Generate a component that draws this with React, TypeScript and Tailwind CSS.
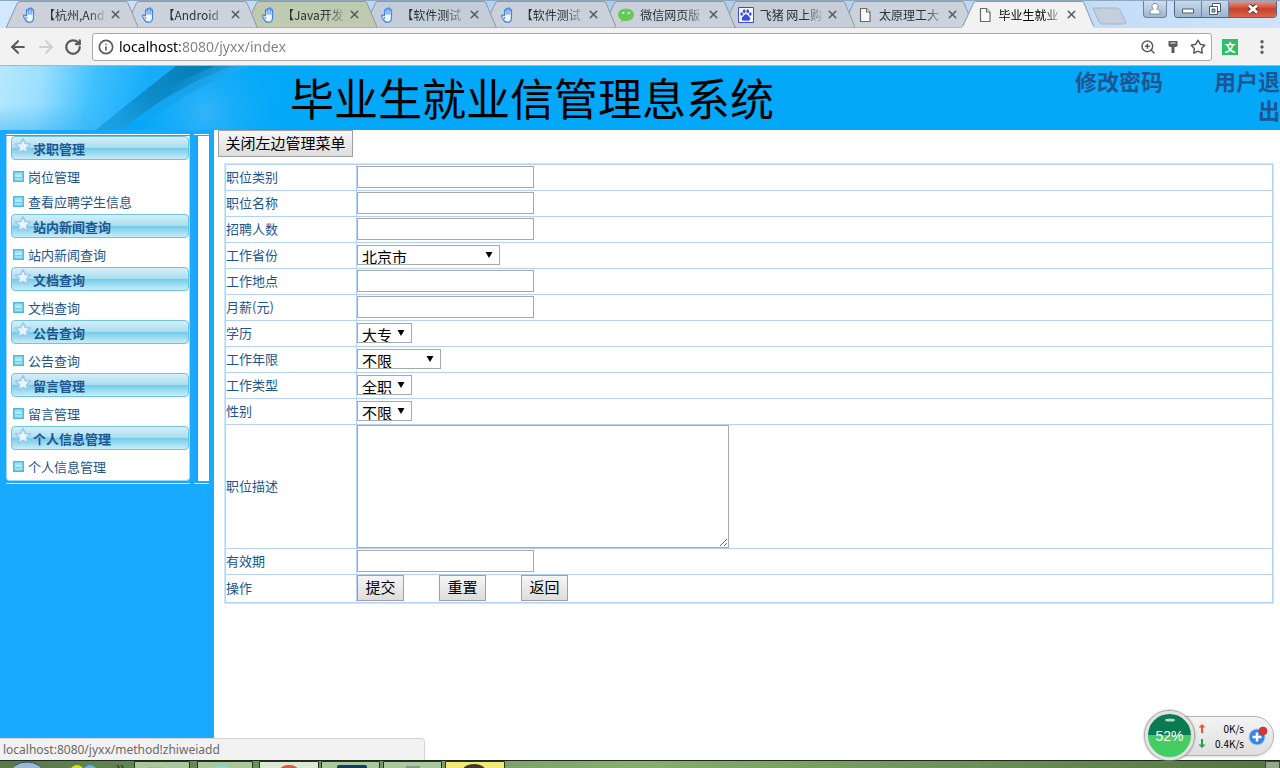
import React, { useState } from 'react';
import { ArrowLeft, ArrowRight, RotateCw, Info, ZoomIn, Star, X, MoreVertical } from 'lucide-react';

type Favicon = 'hand' | 'wechat' | 'paw' | 'file';

interface BrowserTab {
  title: string;
  icon: Favicon;
  fill: string;
}

interface MenuGroup {
  title: string;
  items: string[];
}

interface Field {
  id: string;
  label: string;
  type: 'text' | 'select' | 'textarea';
  options?: string[];
  width?: string;
}

const TABS: BrowserTab[] = [
  { title: '【杭州,And', icon: 'hand', fill: '#cdd2da' },
  { title: '【Android', icon: 'hand', fill: '#cdd3dc' },
  { title: '【Java开发', icon: 'hand', fill: '#bfcab0' },
  { title: '【软件测试', icon: 'hand', fill: '#c3ced8' },
  { title: '【软件测试', icon: 'hand', fill: '#cbd1da' },
  { title: '微信网页版', icon: 'wechat', fill: '#cbd1da' },
  { title: '飞猪 网上购', icon: 'paw', fill: '#c8ced8' },
  { title: '太原理工大', icon: 'file', fill: '#ccd2db' },
  { title: '毕业生就业', icon: 'file', fill: '#f2f2f2' },
];

const MENU: MenuGroup[] = [
  { title: '求职管理', items: ['岗位管理', '查看应聘学生信息'] },
  { title: '站内新闻查询', items: ['站内新闻查询'] },
  { title: '文档查询', items: ['文档查询'] },
  { title: '公告查询', items: ['公告查询'] },
  { title: '留言管理', items: ['留言管理'] },
  { title: '个人信息管理', items: ['个人信息管理'] },
];

const FIELDS: Field[] = [
  { id: 'category', label: '职位类别', type: 'text' },
  { id: 'name', label: '职位名称', type: 'text' },
  { id: 'count', label: '招聘人数', type: 'text' },
  { id: 'province', label: '工作省份', type: 'select', options: ['北京市', '上海市', '天津市'], width: 'w-[143px]' },
  { id: 'place', label: '工作地点', type: 'text' },
  { id: 'salary', label: '月薪(元)', type: 'text' },
  { id: 'degree', label: '学历', type: 'select', options: ['大专', '本科', '硕士'], width: 'w-[55px]' },
  { id: 'years', label: '工作年限', type: 'select', options: ['不限', '一年以上', '三年以上'], width: 'w-[84px]' },
  { id: 'kind', label: '工作类型', type: 'select', options: ['全职', '兼职'], width: 'w-[55px]' },
  { id: 'gender', label: '性别', type: 'select', options: ['不限', '男', '女'], width: 'w-[55px]' },
  { id: 'description', label: '职位描述', type: 'textarea' },
  { id: 'expiry', label: '有效期', type: 'text' },
];

const BUTTON = 'border border-[#a0a0a0] bg-linear-to-b from-[#f6f6f6] to-[#dddddd] pb-[2px] text-[15px] leading-[22px] text-black';

const TabIcon = ({ icon }: { icon: Favicon }) => {
  if (icon === 'hand') {
    return (
      <svg viewBox="0 0 16 16" className="size-4 shrink-0">
        <path
          d="M5.500 8.500V3.500c0-1.200 1.700-1.200 1.700 0V2.200c0-1.300 1.800-1.300 1.800 0v-.5c0-1.200 1.800-1.200 1.800 0v1.500c0-1.200 1.700-1.200 1.700 0V11c0 2.800-1.500 4.200-4 4.200S5 14.500 4.200 12.500L2.600 9.500c-.5-1.300.8-2 1.600-1z"
          fill="#f2f8ff"
          stroke="#3f83ee"
          strokeWidth="1.200"
          strokeLinejoin="round"
        />
        <path d="M7.200 3.500v4.200M9 2.200v5.500M10.800 3v4.700M4.500 9.500l1.500 1.200-.8 1.300" stroke="#3f83ee" strokeWidth=".9" fill="none" />
      </svg>
    );
  }
  if (icon === 'wechat') {
    return (
      <svg viewBox="0 0 16 16" className="size-4 shrink-0">
        <path d="M8 1.500c4.600 0 8 2.800 8 6.300s-3.400 6.200-8 6.200c-.9 0-1.700-.1-2.500-.3L2.800 15l.6-2.200C1.300 11.700 0 9.900 0 7.800 0 4.300 3.400 1.500 8 1.500z" fill="#64c958" />
        <circle cx="5.300" cy="6" r="1.100" fill="#fff" />
        <circle cx="10.700" cy="6" r="1.100" fill="#fff" />
      </svg>
    );
  }
  if (icon === 'paw') {
    return (
      <svg viewBox="0 0 16 16" className="size-4 shrink-0">
        <path d="M.5.5h15v15H.5z" fill="#f5f7ff" stroke="#3c4be0" />
        <g fill="#3c4be0">
          <ellipse cx="3.700" cy="7" rx="1.300" ry="1.800" />
          <ellipse cx="6.200" cy="4.200" rx="1.300" ry="1.900" />
          <ellipse cx="9.700" cy="4.200" rx="1.300" ry="1.900" />
          <ellipse cx="12.300" cy="7" rx="1.300" ry="1.800" />
          <path d="M8 7.200c1.700 0 2.200 1.800 3.500 2.900 1.400 1.300.8 3.700-1.200 3.700-.9 0-1.400-.3-2.300-.3s-1.400.3-2.300.3c-2 0-2.600-2.400-1.200-3.700C5.800 9 6.300 7.200 8 7.200z" />
        </g>
      </svg>
    );
  }
  return (
    <svg viewBox="0 0 16 16" className="size-4 shrink-0" fill="#fafafa" stroke="#6a6a6a" strokeWidth="1.200">
      <path d="M3.500 1.500h6l3.500 3.500v9.500H3.500z" />
      <path d="M9.500 1.500V5H13" />
    </svg>
  );
};

const TabStrip = () => (
  <div className="flex h-7 border-t border-[#8fa6bf] bg-linear-to-r from-[#d3e8fc] via-[#a9cbee] to-[#cfe4fa]">
    <div className="flex min-w-0 flex-1 pl-[6px]">
      {TABS.map((tab, i) => {
        const active = i === TABS.length - 1;
        return (
          <div
            key={i}
            className="relative flex min-w-0 flex-1 items-center pl-[15px]"
            style={{ zIndex: active ? 20 : 10 - i }}
          >
            <svg
              viewBox="0 0 132 28"
              preserveAspectRatio="none"
              className="absolute top-0 left-0 -z-10 h-full w-[calc(100%+13px)]"
            >
              <path d="M0 28L11.500 2Q12.500.5 14 .5H119Q120.500.5 121.500 2L132 28z" fill={tab.fill} stroke="#8d99a8" />
              {active && <path d="M0 27.500H132" stroke="#f2f2f2" strokeWidth="2" />}
            </svg>
            <TabIcon icon={tab.icon} />
            <span
              className={`ml-[6px] min-w-0 flex-1 text-xs whitespace-nowrap mask-r-from-70% ${active ? 'text-black' : 'text-[#2c3138]'}`}
            >
              {tab.title}
            </span>
            <button aria-label="关闭标签" className="mr-[3px] ml-px shrink-0 text-[#5a5f66]">
              <X size={13} strokeWidth={3} />
            </button>
          </div>
        );
      })}
    </div>
    <div className="flex w-[199px] items-start justify-between pr-[3px] pl-[11px]">
      <button aria-label="新标签" className="mt-[6px]">
        <svg viewBox="0 0 35 18" className="h-[18px] w-[35px]">
          <path d="M1 1h24q2 0 3 2l6 12q0 2-2 2H10q-2 0-3-2z" fill="#c5cfdb" stroke="#a3b3c6" />
        </svg>
      </button>
      <div className="flex gap-[7px]">
        <button
          aria-label="用户"
          className="flex h-[17px] w-6 items-center justify-center rounded-b border border-t-0 border-[#6f8299] bg-linear-to-b from-[#cfdff0] to-[#9fb6cf]"
        >
          <svg viewBox="0 0 12 12" className="size-3" fill="#fff" stroke="#66788f" strokeWidth=".8">
            <path d="M1 11V9c0-2 2-2.500 3.500-3A3 3 0 1 1 7.500 6C9 6.500 11 7 11 9v2z" />
          </svg>
        </button>
        <div className="flex h-[17px] overflow-hidden rounded-b border border-t-0 border-[#53667e]">
          <button
            aria-label="最小化"
            className="flex w-[27px] items-center justify-center border-r border-[#6f8299] bg-linear-to-b from-[#c8d9ec] to-[#9cb4ce]"
          >
            <svg viewBox="0 0 12 6" className="mt-1 h-[6px] w-3">
              <path d="M.5 1h11v4H.5z" fill="#fff" stroke="#4d5c70" />
            </svg>
          </button>
          <button
            aria-label="还原"
            className="flex w-[27px] items-center justify-center border-r border-[#6f8299] bg-linear-to-b from-[#c8d9ec] to-[#9cb4ce]"
          >
            <svg viewBox="0 0 12 12" className="size-3" fill="#fff" stroke="#4d5c70">
              <path d="M3.500.5h8v8h-8z" />
              <path d="M.5 3.500h8v8h-8z" />
              <path d="M3 6h3v3H3z" fill="#9cb4ce" />
            </svg>
          </button>
          <button
            aria-label="关闭"
            className="flex w-[47px] items-center justify-center bg-linear-to-b from-[#e0998c] via-[#c9402c] to-[#d9664c]"
          >
            <svg viewBox="0 0 12 10" className="h-[10px] w-3">
              <path d="M2 1.500l8 7M10 1.500l-8 7" stroke="#533" strokeWidth="4.500" />
              <path d="M2 1.500l8 7M10 1.500l-8 7" stroke="#fff" strokeWidth="2.800" />
            </svg>
          </button>
        </div>
      </div>
    </div>
  </div>
);

const Toolbar = () => {
  const [url, setUrl] = useState('localhost:8080/jyxx/index');

  return (
    <div className="flex h-[38px] items-center border-b border-[#b4b4b4] bg-[#f2f2f2] pr-[9px] pl-2 text-[#5a5a5a]">
      <button aria-label="后退" className="mr-2">
        <ArrowLeft size={20} strokeWidth={2.5} />
      </button>
      <button aria-label="前进" className="mr-2 text-[#cfcfcf]">
        <ArrowRight size={20} strokeWidth={2.5} />
      </button>
      <button aria-label="刷新" className="mr-2">
        <RotateCw size={18} strokeWidth={3} />
      </button>
      <div className="ml-[2px] flex h-7 flex-1 items-center rounded-[3px] border border-[#a9a9a9] bg-white pr-[5px] pl-[5px]">
        <Info size={16} strokeWidth={2.5} />
        <input
          aria-label="地址"
          value={url}
          onChange={(e) => setUrl(e.target.value)}
          className="ml-[5px] min-w-0 flex-1 bg-linear-to-r from-black from-[61px] to-[#808080] to-[61px] bg-clip-text font-['Noto_Sans','Noto_Sans_CJK_SC',sans-serif] text-sm text-transparent outline-none"
        />
        <div className="flex items-center gap-[9px]">
          <ZoomIn size={16} strokeWidth={2.2} />
          <svg viewBox="0 0 16 16" className="size-4" fill="#5a5a5a">
            <path fillRule="evenodd" d="M3.500 2h9v5l-1.500 1H9.500v6h-3V8H5L3.500 7zM5.500 3.500v1h5v-1z" />
          </svg>
          <Star size={16} strokeWidth={2.2} />
        </div>
      </div>
      <button
        aria-label="翻译"
        className="ml-[10px] flex size-4 items-center justify-center bg-[#2cc069] text-[11px] leading-4 font-bold text-white"
      >
        文
      </button>
      <button aria-label="菜单" className="ml-[15px]">
        <MoreVertical size={18} strokeWidth={2.5} />
      </button>
    </div>
  );
};

const Banner = () => (
  <header className="relative flex h-16 shrink-0 bg-[#03a8f9]">
    <svg viewBox="0 0 290 64" className="absolute top-0 left-0 h-16 w-[290px]">
      <defs>
        <linearGradient id="sky" x1="0" x2="290" y1="10" y2="60" gradientUnits="userSpaceOnUse">
          <stop offset="0" stopColor="#b6e8ff" />
          <stop offset=".14" stopColor="#9bdfff" />
          <stop offset=".32" stopColor="#3fc0ff" />
          <stop offset=".5" stopColor="#17acfa" />
        </linearGradient>
        <linearGradient id="fold" x1="205" x2="120" y1="0" y2="64" gradientUnits="userSpaceOnUse">
          <stop offset="0" stopColor="#067db4" />
          <stop offset=".6" stopColor="#0d8ccb" />
          <stop offset="1" stopColor="#1b9fe4" />
        </linearGradient>
        <linearGradient id="foldEdge" x1="165" x2="205" y1="20" y2="50" gradientUnits="userSpaceOnUse">
          <stop offset="0" stopColor="#1192d4" stopOpacity="0" />
          <stop offset=".5" stopColor="#1a9de2" />
          <stop offset="1" stopColor="#26aaf0" />
        </linearGradient>
        <radialGradient id="glow" cx="205" cy="46" r="90" gradientUnits="userSpaceOnUse">
          <stop offset="0" stopColor="#33b4f8" />
          <stop offset="1" stopColor="#03a8f9" stopOpacity="0" />
        </radialGradient>
        <linearGradient id="shade" x1="0" x2="0" y1="0" y2="1">
          <stop offset=".6" stopColor="#35b0f0" stopOpacity="0" />
          <stop offset="1" stopColor="#35b0f0" stopOpacity=".45" />
        </linearGradient>
      </defs>
      <path d="M0 0H290V64H0z" fill="#03a8f9" />
      <path d="M0 0H176L96 64H0z" fill="url(#sky)" />
      <path d="M0 0H176L96 64H0z" fill="url(#shade)" />
      <path d="M176 0H290V64H96z" fill="url(#glow)" />
      <path d="M176 0H232Q165 26 122 64H96Q140 28 176 0z" fill="url(#fold)" />
      <path d="M250 0Q180 26 138 64H112Q160 20 215 0z" fill="url(#foldEdge)" opacity=".7" />
    </svg>
    <h1 className="relative flex-1 pl-[290px] text-[44px] leading-[62px] font-normal whitespace-nowrap text-black">
      毕业生就业信管理息系统
    </h1>
    <nav className="flex gap-[51px] text-right text-[22px] leading-[29px] font-bold text-[#1d5590]">
      <a href="#password">修改密码</a>
      <a href="#logout" className="w-[66px]">用户退出</a>
    </nav>
  </header>
);

const Sidebar = () => (
  <aside className="w-[214px] shrink-0 bg-[#18aaff] pt-[4px] pl-[6px]">
    <div className="flex gap-1">
      <div className="w-[184px] border-y border-white pt-px pb-[2px]">
        <div className="rounded-b-sm border-x border-b border-[#9bd5fb] bg-white pr-px pb-px pl-1">
          {MENU.map((group) => (
            <section key={group.title}>
              <h2 className="-mr-px flex h-6 items-center rounded-sm border border-[#6cc4e2] bg-[linear-gradient(#d6eff8,#a9deef_48%,#74ccea_52%,#c8edf8)] pl-px text-[13px] font-bold text-[#1d5590]">
                <svg viewBox="0 0 20 20" className="-mt-1 size-5 shrink-0">
                  <path
                    d="M10 2.500l2.300 4.900 5.300.6-3.900 3.700 1 5.300-4.700-2.600L5.300 17l1-5.300L2.400 8l5.300-.6z"
                    fill="#e2f6fd"
                    stroke="#a2c6e6"
                    strokeWidth="1.500"
                    strokeLinejoin="round"
                  />
                </svg>
                <span className="pt-[2px]">{group.title}</span>
              </h2>
              <ul className="pt-1">
                {group.items.map((item) => (
                  <li key={item} className="h-[25px]">
                    <a href="#item" className="flex h-full items-center gap-1 pl-[2px] text-[13px] text-[#1d5590]">
                      <svg viewBox="0 0 11 11" className="size-[11px]">
                        <path d="M.8.8h9.400v9.400H.8z" fill="#9fe2f2" stroke="#45bbdf" strokeWidth="1.500" />
                        <path d="M2.500 5h6" stroke="#d4f4fc" />
                        <path d="M2.500 6.500h6" stroke="#6fcbe6" />
                      </svg>
                      {item}
                    </a>
                  </li>
                ))}
              </ul>
            </section>
          ))}
        </div>
      </div>
      <div className="flex w-[15px] border-y border-white pt-px pb-[2px]">
        <div className="ml-[2px] flex-1 border-l-2 border-[#1a9cfa] bg-white" />
      </div>
    </div>
  </aside>
);

const FieldControl = ({ field }: { field: Field }) => {
  if (field.type === 'textarea') {
    return (
      <textarea id={field.id} className="block h-[123px] w-[372px] resize border border-[#a9a9a9] bg-white" />
    );
  }
  if (field.type === 'select') {
    return (
      <div className={`relative h-5 ${field.width}`}>
        <select
          id={field.id}
          className="block h-5 w-full appearance-none rounded-none border border-[#a9a9a9] bg-white pt-px pl-[4px] text-[15px] leading-5 text-black"
        >
          {field.options?.map((option) => (
            <option key={option}>{option}</option>
          ))}
        </select>
        <svg viewBox="0 0 8 6" className="pointer-events-none absolute top-[7px] right-[7px] h-[6px] w-2">
          <path d="M.5 0h7L4 6z" />
        </svg>
      </div>
    );
  }
  return <input id={field.id} type="text" className="block h-[22px] w-[177px] border border-[#a9a9a9] bg-white px-1 text-sm" />;
};

const JobForm = () => (
  <form className="mt-[6px] mr-[6px] ml-[10px] border border-[#c4ebff]" onSubmit={(e) => e.preventDefault()}>
    <table className="w-full border-collapse text-[13px] text-[#1d5590]">
      <tbody>
        {FIELDS.map((field) => (
          <tr key={field.id} className="h-[26px]">
            <td className="w-[131px] border border-[#b4d2f4] p-0 pb-px">
              <label htmlFor={field.id}>{field.label}</label>
            </td>
            <td className={`border border-[#b4d2f4] p-0 ${field.type === 'textarea' ? '' : 'pb-[2px]'}`}>
              <FieldControl field={field} />
            </td>
          </tr>
        ))}
        <tr className="h-7">
          <td className="border border-[#b4d2f4] p-0 pb-px">操作</td>
          <td className="border border-[#b4d2f4] p-0 pb-px">
            <div className="flex gap-[35px]">
              <button type="submit" className={`${BUTTON} w-[47px]`}>提交</button>
              <button type="reset" className={`${BUTTON} w-[47px]`}>重置</button>
              <button type="button" className={`${BUTTON} w-[47px]`}>返回</button>
            </div>
          </td>
        </tr>
      </tbody>
    </table>
  </form>
);

const SpeedWidget = () => (
  <div className="absolute right-[6px] bottom-2 z-20 flex items-center">
    <div className="relative z-10 flex size-[49px] items-center justify-center rounded-full border-3 border-[#e2e2e2] bg-linear-to-b from-[#0a7a50] from-50% to-[#45cc62] to-50% font-['Liberation_Sans',sans-serif] text-sm text-white shadow-[0_0_2px_1px_#8a8a8a]">
      <svg viewBox="0 0 20 8" className="absolute top-[3px] left-3 h-2 w-5">
        <ellipse cx="10" cy="3" rx="5" ry="1.500" fill="#fff" opacity=".7" />
      </svg>
      52%
    </div>
    <div className="-ml-[27px] flex h-10 items-center rounded-r-full border border-[#b4b4b4] bg-linear-to-b from-[#f4f4f4] to-[#dedede] pr-[5px] pl-[30px] text-[10px] leading-[15px] text-black shadow">
      <div className="flex flex-col gap-[6px]">
        <svg viewBox="0 0 8 9" className="h-[9px] w-2">
          <path d="M4 0l3.500 3.500H5V9H3V3.500H.5z" fill="#e8553a" />
        </svg>
        <svg viewBox="0 0 8 9" className="h-[9px] w-2">
          <path d="M4 9L.5 5.500H3V0h2v5.500h2.500z" fill="#22a050" />
        </svg>
      </div>
      <div className="w-[38px] text-right">
        <div>0K/s</div>
        <div>0.4K/s</div>
      </div>
      <svg viewBox="0 0 20 20" className="ml-1 size-5">
        <circle cx="9" cy="11" r="8" fill="#3a83e0" stroke="#a8c8f0" />
        <path d="M9 6.500v9M4.500 11h9" stroke="#fff" strokeWidth="2.500" />
        <circle cx="15" cy="5" r="4" fill="#d93636" stroke="#a82222" strokeWidth=".5" />
      </svg>
    </div>
  </div>
);

const TaskBar = () => (
  <footer className="flex h-2 shrink-0 overflow-hidden border-t border-[#1c2a18] bg-linear-to-r from-[#58784a] via-[#86ae70] to-[#54743f]">
    <svg viewBox="0 0 520 7" className="h-[7px] w-[520px]">
      <ellipse cx="27" cy="13" rx="17" ry="12" fill="#9fb6cc" stroke="#24517c" />
      <circle cx="77" cy="11" r="7" fill="#c9e600" />
      <circle cx="90" cy="11" r="7" fill="#5fb2ee" />
      <path d="M117 5h2M121 5h2M118 7h2M122 7h2" stroke="#111" />
      <g stroke="#24351d" fill="#a9c79a">
        <path d="M134.500 .5h55v10h-55zM197.500 .5h55v10h-55zM321.500 .5h58v10h-58zM383.500 .5h58v10h-58z" />
        <path d="M259.500 .5h59v10h-59z" fill="#dce8d4" />
        <path d="M445.500 .5h59v10h-59z" fill="#f2e878" />
      </g>
      <path d="M148 7h14" stroke="#dba65a" strokeWidth="2" />
      <ellipse cx="222" cy="9" rx="11" ry="4" fill="#7fdcea" />
      <ellipse cx="289" cy="9" rx="9" ry="5" fill="#da5346" />
      <rect x="337" y="4" width="30" height="6" rx="2" fill="#163a66" />
      <path d="M406 6h14" stroke="#889487" strokeWidth="2" />
      <ellipse cx="474" cy="9" rx="11" ry="6" fill="#3b3a2c" />
    </svg>
    <svg viewBox="0 0 20 7" className="ml-auto h-[7px] w-5">
      <path d="M5.500 .5h14v8h-14z" fill="#93a78a" stroke="#3a4c33" />
    </svg>
  </footer>
);

const App: React.FC = () => {
  const [menuOpen, setMenuOpen] = useState(true);

  return (
    <div className="relative flex min-h-screen flex-col bg-white font-['Noto_Sans_CJK_SC',sans-serif]">
      <TabStrip />
      <Toolbar />
      <Banner />
      <div className="flex flex-1">
        {menuOpen && <Sidebar />}
        <main className="min-w-0 flex-1">
          <button className={`${BUTTON} ml-1 block h-[27px] w-[135px]`} onClick={() => setMenuOpen(!menuOpen)}>
            关闭左边管理菜单
          </button>
          <JobForm />
        </main>
      </div>
      <div className="absolute bottom-2 left-0 h-[22px] w-[425px] rounded-tr border-t border-r border-[#d4d4d4] bg-[#f2f2f2] pl-[3px] font-['Noto_Sans',sans-serif] text-xs leading-[22px] text-[#6a6a6a]">
        localhost:8080/jyxx/method!zhiweiadd
      </div>
      <SpeedWidget />
      <TaskBar />
    </div>
  );
};

export default App;
